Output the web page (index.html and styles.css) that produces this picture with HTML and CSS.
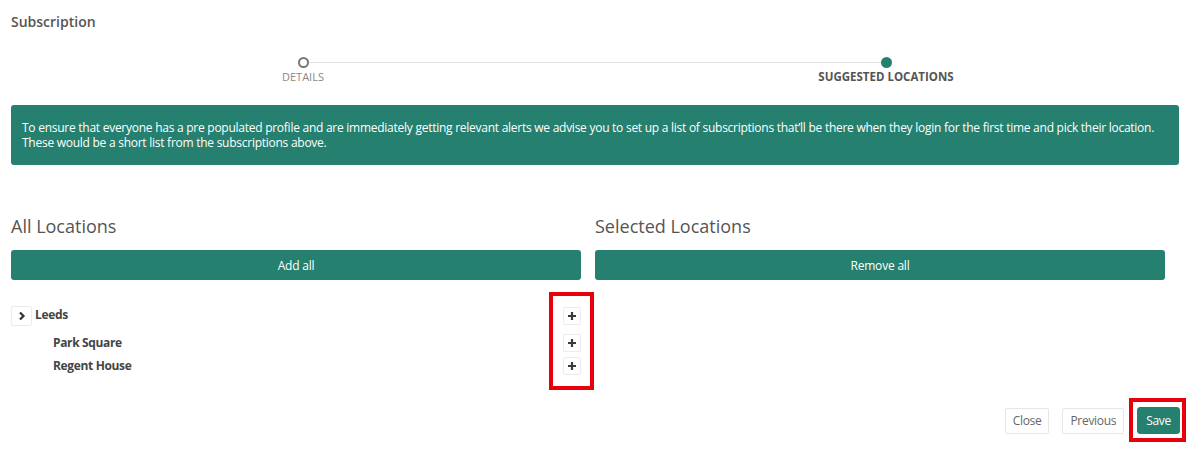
FILE: index.html
```html
<!DOCTYPE html>
<html>
<head>
<meta charset="utf-8">
<link rel="stylesheet" href="styles.css">
</head>
<body>
<div class="page">
  <h1 class="title">Subscription</h1>

  <div class="stepper">
    <div class="step">
      <span class="dot dot-open"></span>
      <span class="step-label">DETAILS</span>
    </div>
    <div class="step step-active">
      <span class="dot dot-filled"></span>
      <span class="step-label">SUGGESTED LOCATIONS</span>
    </div>
  </div>

  <div class="banner">
    To ensure that everyone has a pre populated profile and are immediately getting relevant alerts we advise you to set up a list of subscriptions that’ll be there when they login for the first time and pick their location.<br>
    These would be a short list from the subscriptions above.
  </div>

  <div class="columns">
    <div class="col">
      <h2 class="col-title">All Locations</h2>
      <button class="wide-btn">Add all</button>
      <div class="tree">
        <div class="tree-row parent">
          <span class="toggle">
            <svg width="10" height="10" viewBox="0 0 10 10"><path d="M3 1.5 L6.5 5 L3 8.5" fill="none" stroke="#333" stroke-width="2.2"/></svg>
          </span>
          <span class="name">Leeds</span>
          <span class="plus"><svg width="10" height="10" viewBox="0 0 10 10"><path d="M5 1 V9 M1 5 H9" stroke="#3a3a3a" stroke-width="2.2"/></svg></span>
        </div>
        <div class="tree-row child">
          <span class="name">Park Square</span>
          <span class="plus"><svg width="10" height="10" viewBox="0 0 10 10"><path d="M5 1 V9 M1 5 H9" stroke="#3a3a3a" stroke-width="2.2"/></svg></span>
        </div>
        <div class="tree-row child">
          <span class="name">Regent House</span>
          <span class="plus"><svg width="10" height="10" viewBox="0 0 10 10"><path d="M5 1 V9 M1 5 H9" stroke="#3a3a3a" stroke-width="2.2"/></svg></span>
        </div>
      </div>
    </div>
    <div class="col">
      <h2 class="col-title">Selected Locations</h2>
      <button class="wide-btn">Remove all</button>
    </div>
  </div>

  <div class="footer">
    <button class="btn">Close</button>
    <button class="btn">Previous</button>
    <button class="btn btn-primary">Save</button>
  </div>

  <div class="highlight highlight-plus"></div>
  <div class="highlight highlight-save"></div>
</div>
</body>
</html>
```

FILE: styles.css
```css
* { box-sizing: border-box; }
html, body { margin: 0; padding: 0; background: #fff; }
body {
  font-family: "Open Sans", "Liberation Sans", sans-serif;
  color: #555;
}
.page {
  position: relative;
  width: 1201px;
  height: 451px;
  padding: 12px 22px 0 11px;
}
.title {
  margin: 0;
  font-size: 14px;
  line-height: 20px;
  font-weight: 600;
  color: #555;
}
.stepper {
  position: relative;
  margin-top: 25px;
  display: flex;
  justify-content: space-between;
  padding: 0 213px 0 212px;
}
.stepper::before {
  content: "";
  position: absolute;
  left: 297px;
  width: 573px;
  top: 5px;
  height: 1px;
  background: #e3e3e3;
}
.step {
  width: 160px;
  display: flex;
  flex-direction: column;
  align-items: center;
}
.dot {
  position: relative;
  width: 11px;
  height: 11px;
  border-radius: 50%;
}
.dot-open { border: 2px solid #777; background: #fff; }
.dot-filled { background: #25806f; }
.step-label {
  margin-top: 2px;
  font-size: 11px;
  line-height: 14px;
  color: #888;
  white-space: nowrap;
}
.step-active .step-label { color: #555; font-weight: 700; font-size: 11.5px; }
.banner {
  margin-top: 21px;
  width: 1168px;
  background: #25806f;
  color: #fff;
  border-radius: 3px;
  font-size: 12px;
  line-height: 15px;
  letter-spacing: -0.26px;
  padding: 15px 11px 15px 11px;
  height: 60px;
}
.columns {
  display: grid;
  grid-template-columns: 570px 570px;
  column-gap: 14px;
  margin-top: 49px;
}
.col-title {
  margin: 0;
  font-size: 18px;
  line-height: 24px;
  font-weight: 400;
  color: #555;
}
.wide-btn {
  display: block;
  width: 100%;
  margin-top: 12px;
  height: 30px;
  border: none;
  border-radius: 3px;
  background: #25806f;
  color: #fff;
  font-family: inherit;
  font-size: 12px;
  letter-spacing: -0.2px;
}
.tree { margin-top: 25px; }
.tree-row {
  display: flex;
  align-items: center;
  font-size: 12px;
  font-weight: 700;
  letter-spacing: -0.35px;
  color: #444;
}
.tree-row.parent { height: 20px; }
.tree-row.child { height: 18px; padding-left: 42px; margin-top: 5px; }
.tree-row.parent + .tree-row.child { margin-top: 9px; }
.toggle {
  width: 21px;
  height: 20px;
  border: 1px solid #ececec;
  border-radius: 2px;
  display: flex;
  align-items: center;
  justify-content: center;
  margin-right: 3px;
  margin-top: 2px;
}
.name { flex: 1; line-height: 18px; }
.plus {
  width: 18px;
  height: 18px;
  border: 1px solid #ececec;
  border-radius: 2px;
  display: flex;
  align-items: center;
  justify-content: center;
}
.parent .plus { margin-top: 2px; }
.footer {
  display: flex;
  justify-content: flex-end;
  gap: 13px;
  margin-top: 32px;
  margin-right: -1px;
  align-items: center;
}
.btn {
  height: 26px;
  padding: 0 7px;
  border: 1px solid #e6e6e6;
  border-radius: 2px;
  background: #fff;
  color: #666;
  font-family: inherit;
  font-size: 12px;
  letter-spacing: -0.3px;
}
.btn-primary {
  height: 27px;
  padding: 0 8px;
  background: #25806f;
  border-color: #25806f;
  color: #fff;
  border-radius: 3px;
}
.highlight {
  position: absolute;
  border: 4px solid #e8000b;
}
.highlight-plus { left: 549px; top: 292px; width: 45px; height: 98px; }
.highlight-save { left: 1129px; top: 398px; width: 57px; height: 44px; }
```
